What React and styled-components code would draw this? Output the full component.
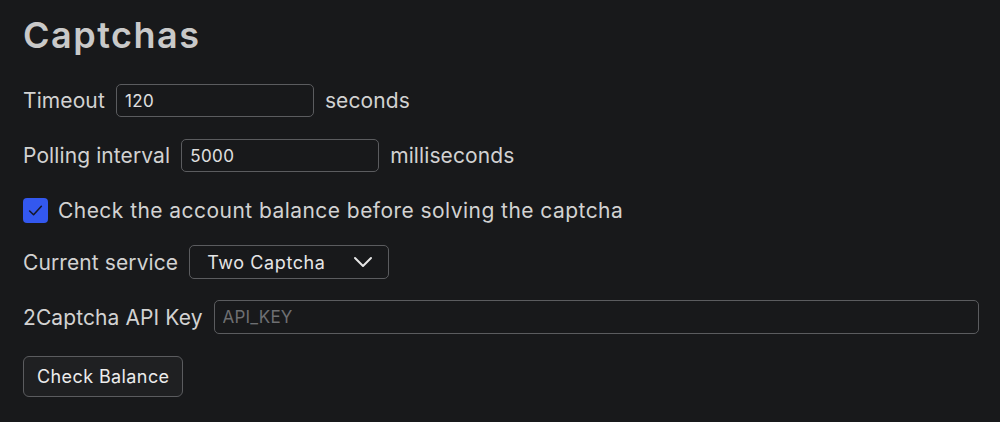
import React, { useState } from 'react';
import styled, { createGlobalStyle } from 'styled-components';

const GlobalStyle = createGlobalStyle`
    html, body {
        margin: 0;
        padding: 0;
        background: #18191b;
    }
    body {
        font-family: Inter, "Noto Sans", sans-serif;
        color: #d2d2d2;
    }
`;

const Page = styled.div`
    display: flex;
    flex-direction: column;
    align-items: flex-start;
    padding: 11px 21px 20px 23px;
    min-height: 422px;
    box-sizing: border-box;
`;

const Title = styled.h1`
    margin: 0 0 25px 0;
    font-size: 36px;
    font-weight: 600;
    letter-spacing: 1.5px;
    color: #c9c9c9;
    line-height: 48px;
`;

const Row = styled.div`
    display: flex;
    align-items: center;
    gap: ${({ $space }) => $space ?? 11}px;
    height: ${({ $height }) => $height ?? 33}px;
    margin-bottom: ${({ $gap }) => $gap ?? 22}px;
    width: ${({ $full }) => ($full ? '100%' : 'auto')};
    font-size: 21px;
`;

const Label = styled.label`
    white-space: nowrap;
    color: #d2d2d2;
    letter-spacing: ${({ $spacing }) => $spacing ?? 0.1}px;
`;

const TextInput = styled.input`
    box-sizing: border-box;
    width: ${({ $width }) => ($width ? `${$width}px` : 'auto')};
    flex: ${({ $grow }) => ($grow ? 1 : 'none')};
    height: 100%;
    padding: 0 8px;
    background: transparent;
    border: 1.5px solid #5b5c5f;
    border-radius: 5px;
    color: #e0e0e0;
    font-family: inherit;
    font-size: 17px;
    letter-spacing: 0.4px;
    outline: none;

    &::placeholder {
        color: #6e6f72;
        letter-spacing: 0.2px;
    }
`;

const CheckBox = styled.span`
    display: inline-flex;
    align-items: center;
    justify-content: center;
    width: 25px;
    height: 25px;
    border-radius: 4px;
    background: #3358ef;
`;

const Select = styled.button`
    box-sizing: border-box;
    display: flex;
    align-items: center;
    justify-content: space-between;
    width: 200px;
    height: 100%;
    padding: 0 15px 0 17px;
    background: transparent;
    border: 1.5px solid #5b5c5f;
    border-radius: 5px;
    color: #e6e6e6;
    font-family: inherit;
    font-size: 18px;
    letter-spacing: 0.6px;
    cursor: pointer;
`;

const Button = styled.button`
    box-sizing: border-box;
    height: 41px;
    padding: 0 13px;
    background: #1f2022;
    border: 1.5px solid #5b5c5f;
    border-radius: 6px;
    color: #ececec;
    font-family: inherit;
    font-size: 18px;
    letter-spacing: 0.4px;
    cursor: pointer;
`;

const Check = () => (
    <svg width="17" height="17" viewBox="0 0 16 16" fill="none">
        <path d="M2.5 8.5 L6.2 12 L13.5 4" stroke="#16182a" strokeWidth="1.5" strokeLinecap="round" strokeLinejoin="round" />
    </svg>
);

const Chevron = () => (
    <svg width="20" height="20" viewBox="0 0 20 20" fill="none">
        <path d="M2 6 L10 14 L18 6" stroke="#e6e6e6" strokeWidth="2" strokeLinecap="round" strokeLinejoin="round" />
    </svg>
);

export default function App() {
    const [timeout, setTimeoutValue] = useState('120');
    const [interval, setIntervalValue] = useState('5000');
    const [apiKey, setApiKey] = useState('');

    return (
        <>
            <GlobalStyle />
            <Page>
                <Title>Captchas</Title>

                <Row>
                    <Label>Timeout</Label>
                    <TextInput $width={198} value={timeout} onChange={e => setTimeoutValue(e.target.value)} />
                    <Label>seconds</Label>
                </Row>

                <Row>
                    <Label>Polling interval</Label>
                    <TextInput $width={198} value={interval} onChange={e => setIntervalValue(e.target.value)} />
                    <Label>milliseconds</Label>
                </Row>

                <Row $gap={18} $space={10}>
                    <CheckBox><Check /></CheckBox>
                    <Label $spacing={0.45}>Check the account balance before solving the captcha</Label>
                </Row>

                <Row $gap={21} $height={34}>
                    <Label>Current service</Label>
                    <Select>
                        <span>Two Captcha</span>
                        <Chevron />
                    </Select>
                </Row>

                <Row $full $gap={22} $height={34}>
                    <Label>2Captcha API Key</Label>
                    <TextInput $grow placeholder="API_KEY" value={apiKey} onChange={e => setApiKey(e.target.value)} />
                </Row>

                <Button>Check Balance</Button>
            </Page>
        </>
    );
}
